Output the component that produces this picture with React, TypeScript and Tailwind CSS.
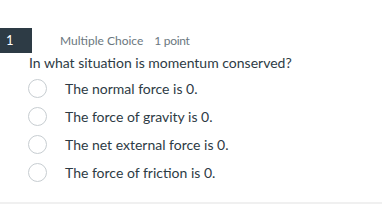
export default function App() {
  const answers = [
    "The normal force is 0.",
    "The force of gravity is 0.",
    "The net external force is 0.",
    "The force of friction is 0.",
  ];

  return (
    <div className="h-[207px] w-[382px] bg-white font-['Lato',sans-serif] text-[#2d3b45]">
      <div className="h-[204px] border-b-2 border-[#f0f0f0] pt-[28px]">
        <div className="flex h-[25px] items-center">
          <div className="flex h-full w-[32px] items-center bg-[#2d3b45] pl-[6px] text-[13px] text-white">
            1
          </div>
          <div className="ml-[28px] text-[12px] text-[#6b7780]">Multiple Choice</div>
          <div className="ml-[11px] text-[12px] tracking-[-0.3px] text-[#6b7780]">1 point</div>
        </div>
        <p className="ml-[29px] mt-[1px] text-[14px] leading-[18px]">
          In what situation is momentum conserved?
        </p>
        <ul className="mt-[2px] flex flex-col">
          {answers.map((a) => (
            <li key={a} className="flex h-[28px] items-center">
              <span className="ml-[28px] size-[19px] rounded-full border border-[#c7cdd1]" />
              <span className="ml-[18px] text-[14px]">{a}</span>
            </li>
          ))}
        </ul>
      </div>
    </div>
  );
}
